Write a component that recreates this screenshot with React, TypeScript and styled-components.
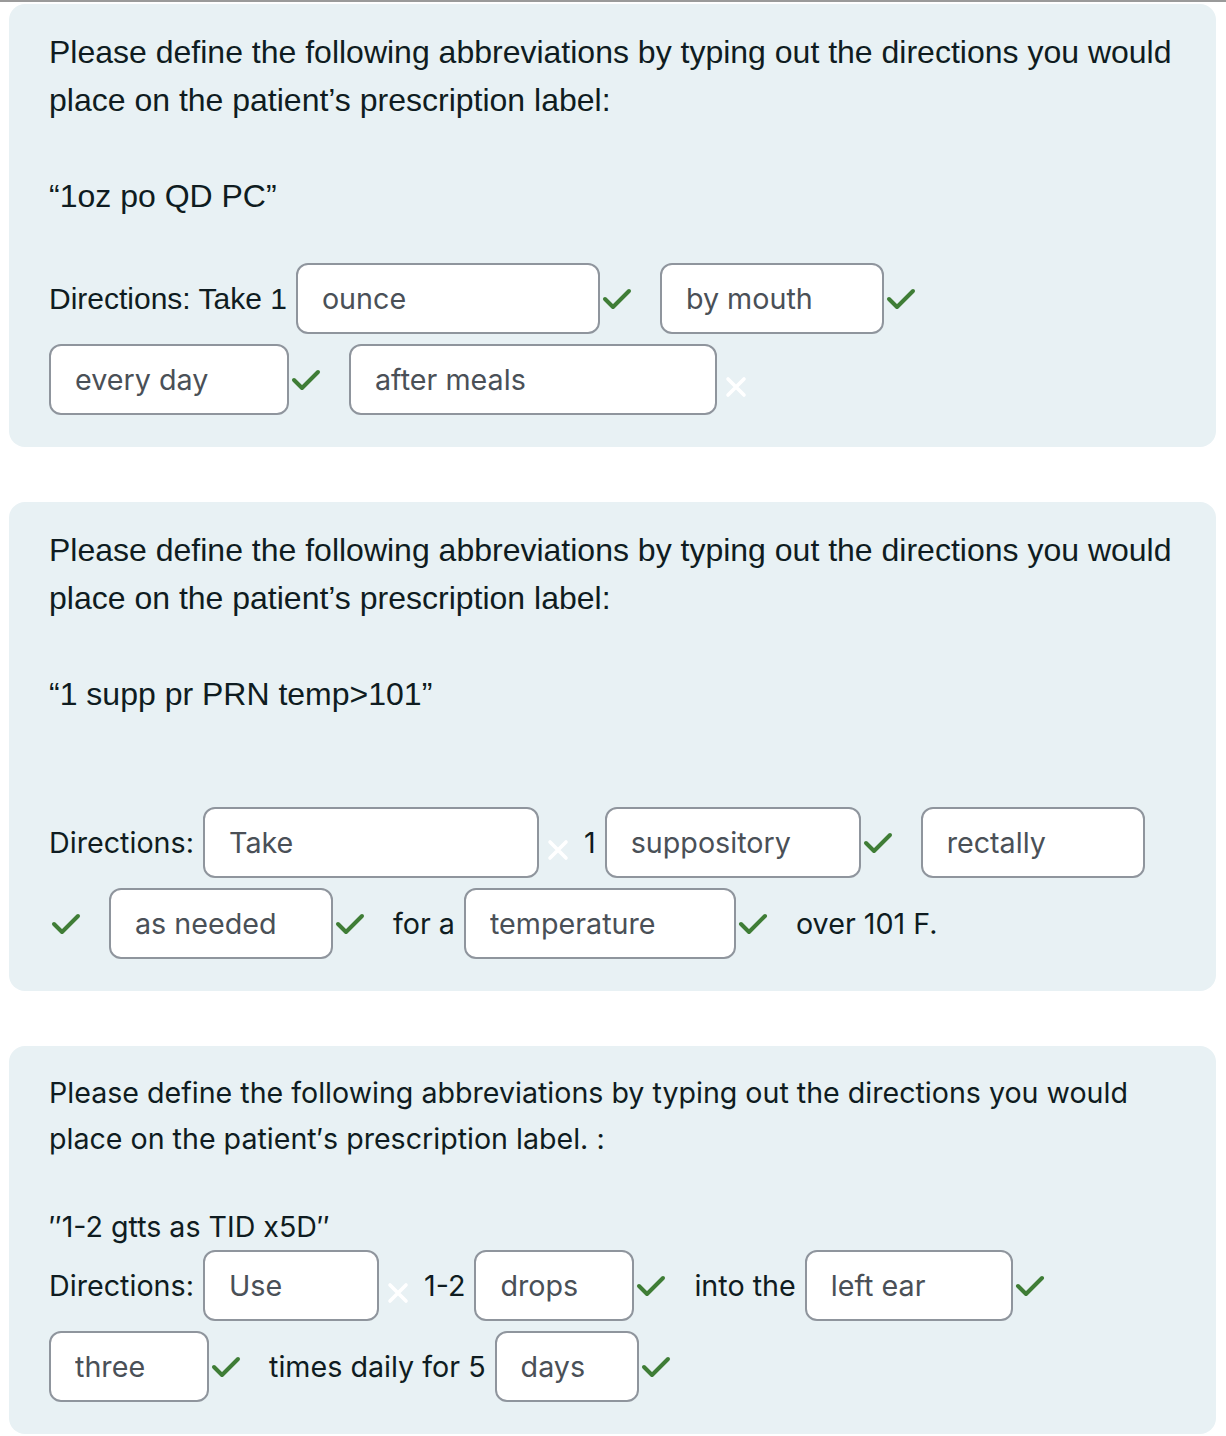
import styled, { createGlobalStyle } from "styled-components"

const GlobalStyle = createGlobalStyle`
	body {
		margin: 0;
		background: #ffffff;
		border-top: 2px solid #9a9a9a;
	}
`

const Page = styled.div`
	display: flex;
	flex-direction: column;
	gap: 55px;
	padding: 2px 10px 4px 9px;
`

const Card = styled.section<{ $modern?: boolean }>`
	background: #e8f1f4;
	border-radius: 16px;
	padding: 24px 40px 32px;
	color: #0f1c21;
	font-family: ${(p) => (p.$modern ? `Inter, "Noto Sans", sans-serif` : `"Liberation Sans", Arial, sans-serif`)};
	font-size: ${(p) => (p.$modern ? "28.6px" : "32px")};
	line-height: ${(p) => (p.$modern ? "46px" : "48px")};
`

const Prompt = styled.p`
	margin: 0;
`

const Quote = styled.p<{ $top: number; $bottom: number }>`
	margin: ${(p) => p.$top}px 0 ${(p) => p.$bottom}px;
`

const Row = styled.div<{ $modern?: boolean }>`
	display: flex;
	flex-wrap: wrap;
	align-items: center;
	row-gap: 10px;
	font-family: ${(p) => (p.$modern ? `Inter, "Noto Sans", sans-serif` : `"Liberation Sans", Arial, sans-serif`)};
	font-size: ${(p) => (p.$modern ? "28.7px" : "30px")};
	line-height: 36px;
`

const Words = styled.span`
	margin-right: 9px;
	white-space: nowrap;
`

const Field = styled.input<{ $w: number }>`
	box-sizing: border-box;
	width: ${(p) => p.$w}px;
	height: 71px;
	padding: 0 24px;
	border: 2px solid #8f959d;
	border-radius: 12px;
	background: #ffffff;
	color: #4a5057;
	font-family: Inter, "Noto Sans", sans-serif;
	font-size: 28.7px;
	outline: none;
`

const CheckMark = styled.svg`
	flex: none;
	width: 30px;
	height: 22px;
	margin: 0 28px 0 2px;
`

const CrossMark = styled.svg`
	flex: none;
	width: 22px;
	height: 22px;
	margin: 14px 15px 0 8px;
`

const Check = () => (
	<CheckMark viewBox='0 0 30 22'>
		<polyline points='3,11 11,19 27,3' fill='none' stroke='#3f7d36' strokeWidth='4' strokeLinecap='round' strokeLinejoin='round' />
	</CheckMark>
)

const Cross = () => (
	<CrossMark viewBox='0 0 22 22'>
		<path d='M3 3 L19 19 M19 3 L3 19' fill='none' stroke='#ffffff' strokeWidth='3.6' strokeLinecap='round' />
	</CrossMark>
)

type Part = { text: string } | { value: string; w: number; ok: boolean }

const Answer = ({ parts, modern }: { parts: Part[]; modern?: boolean }) => (
	<Row $modern={modern}>
		{parts.map((p, i) =>
			"text" in p ? (
				<Words key={i}>{p.text}</Words>
			) : (
				[<Field key={i} $w={p.w} defaultValue={p.value} />, p.ok ? <Check key={i + "c"} /> : <Cross key={i + "x"} />]
			)
		)}
	</Row>
)

const App = () => {
	return (
		<>
			<GlobalStyle />
			<Page>
				<Card>
					<Prompt>
						Please define the following abbreviations by typing out the directions you would place on the patient’s prescription label:
					</Prompt>
					<Quote $top={48} $bottom={43}>
						“1oz po QD PC”
					</Quote>
					<Answer
						parts={[
							{ text: "Directions: Take 1" },
							{ value: "ounce", w: 304, ok: true },
							{ value: "by mouth", w: 224, ok: true },
							{ value: "every day", w: 240, ok: true },
							{ value: "after meals", w: 368, ok: false },
						]}
					/>
				</Card>
				<Card>
					<Prompt>
						Please define the following abbreviations by typing out the directions you would place on the patient’s prescription label:
					</Prompt>
					<Quote $top={48} $bottom={89}>
						“1 supp pr PRN temp&gt;101”
					</Quote>
					<Answer
						modern
						parts={[
							{ text: "Directions:" },
							{ value: "Take", w: 336, ok: false },
							{ text: "1" },
							{ value: "suppository", w: 256, ok: true },
							{ value: "rectally", w: 224, ok: true },
							{ value: "as needed", w: 224, ok: true },
							{ text: "for a" },
							{ value: "temperature", w: 272, ok: true },
							{ text: "over 101 F." },
						]}
					/>
				</Card>
				<Card $modern>
					<Prompt>
						Please define the following abbreviations by typing out the directions you would place on the patient′s prescription label. :
					</Prompt>
					<Quote $top={42} $bottom={0}>
						″1-2 gtts as TID x5D″
					</Quote>
					<Answer
						modern
						parts={[
							{ text: "Directions:" },
							{ value: "Use", w: 176, ok: false },
							{ text: "1-2" },
							{ value: "drops", w: 160, ok: true },
							{ text: "into the" },
							{ value: "left ear", w: 208, ok: true },
							{ value: "three", w: 160, ok: true },
							{ text: "times daily for 5" },
							{ value: "days", w: 144, ok: true },
						]}
					/>
				</Card>
			</Page>
		</>
	)
}

export default App
